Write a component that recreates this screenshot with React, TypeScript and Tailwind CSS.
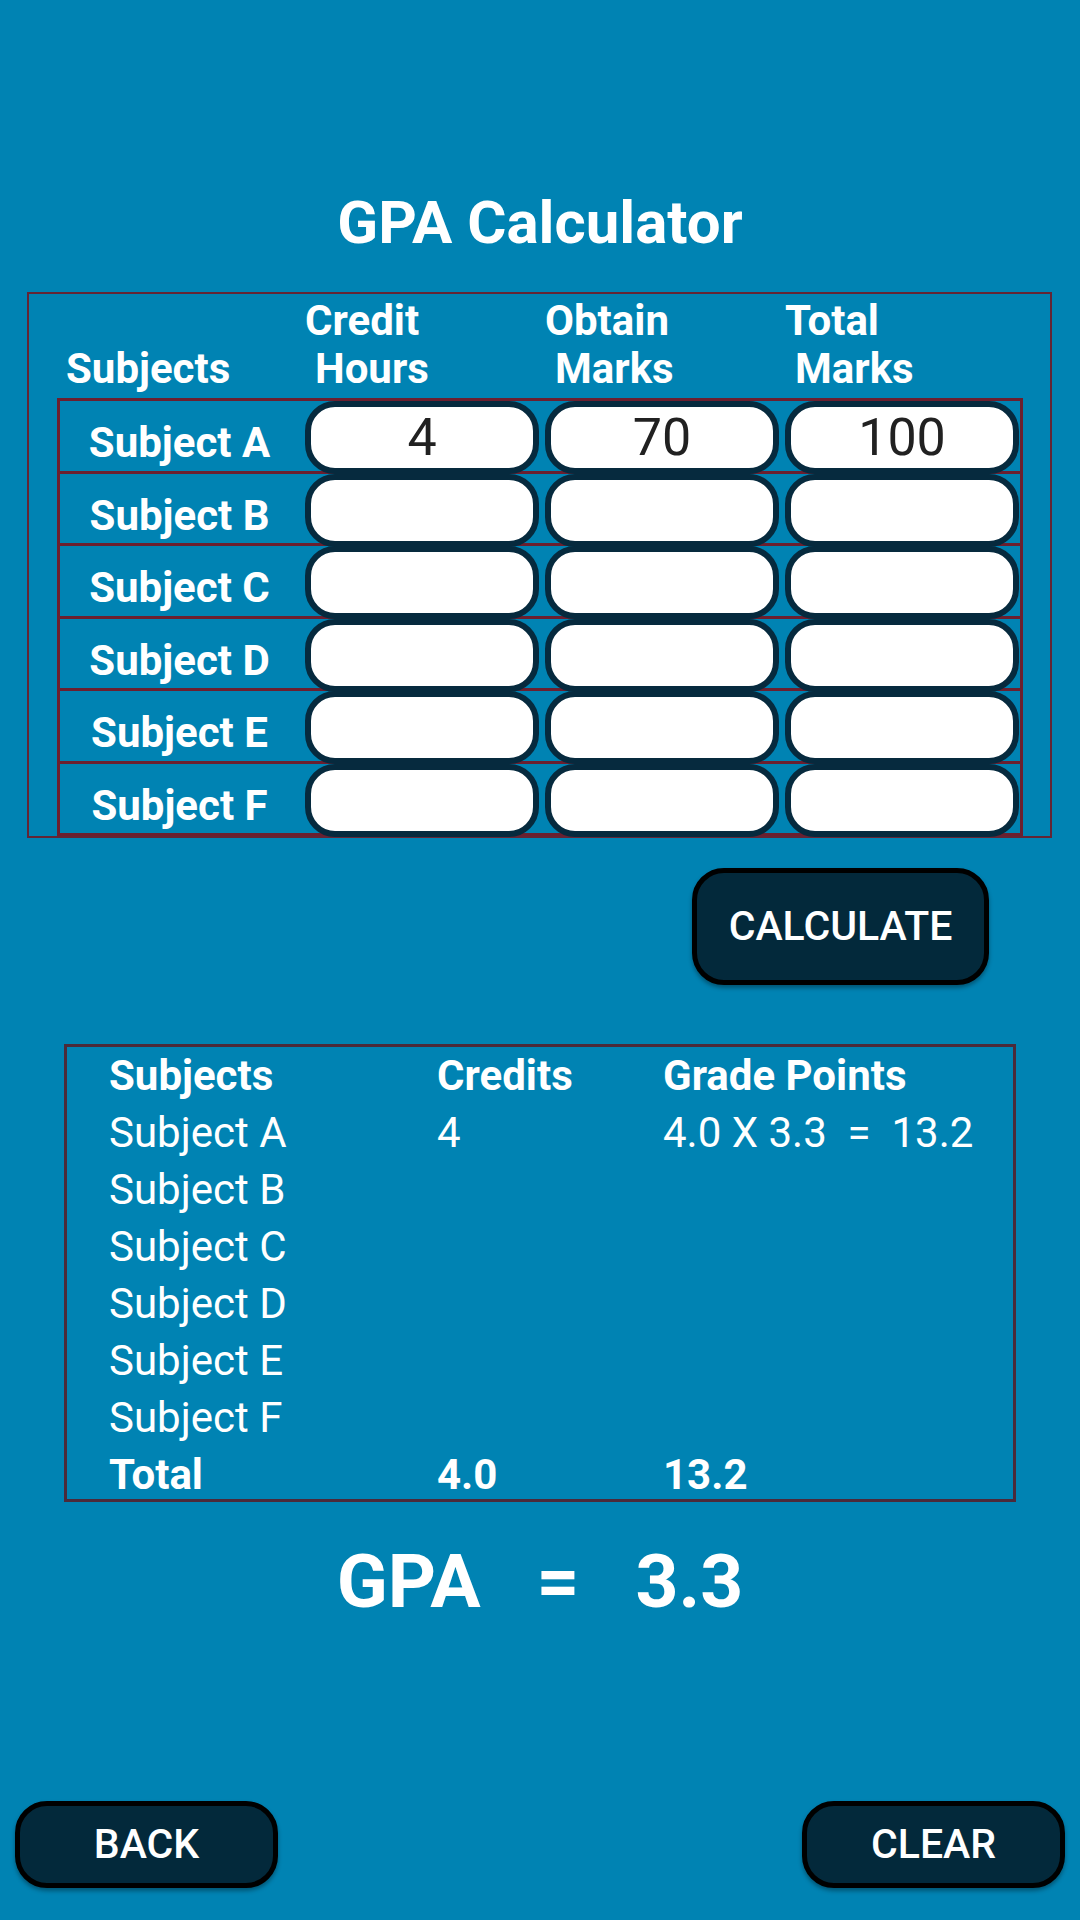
const SUBJECTS = ['A', 'B', 'C', 'D', 'E', 'F'];

const INPUTS: Record<string, [string, string, string]> = {
  A: ['4', '70', '100'],
};

const RESULTS: { name: string; credits: string; points: string }[] = [
  { name: 'Subject A', credits: '4', points: '4.0 X 3.3  =  13.2' },
  { name: 'Subject B', credits: '', points: '' },
  { name: 'Subject C', credits: '', points: '' },
  { name: 'Subject D', credits: '', points: '' },
  { name: 'Subject E', credits: '', points: '' },
  { name: 'Subject F', credits: '', points: '' },
];

function Field({ value }: { value: string }) {
  return (
    <input
      readOnly
      value={value}
      className="w-full h-full min-w-0 rounded-[30px] border-[6px] border-[#062a3e] bg-white text-center text-[52px] leading-none text-[#212121] outline-none"
    />
  );
}

function DarkButton({ label, className }: { label: string; className: string }) {
  return (
    <button
      className={`flex items-center justify-center rounded-[32px] border-[5px] border-black bg-[#03293b] text-[41px] font-medium text-white shadow-[0_3px_4px_rgba(0,0,0,0.35)] ${className}`}
    >
      {label}
    </button>
  );
}

export default function App() {
  return (
    <div className="w-[1080px] h-[1920px] bg-[#0083b3] flex flex-col font-['Roboto','Liberation_Sans',sans-serif] text-white">
      <h1 className="mt-[188px] h-[70px] leading-[70px] text-center text-[60px] font-bold">GPA Calculator</h1>

      <div className="mt-[34px] ml-[27px] w-[1025px] border-2 border-[#632535]">
        <div className="h-[104px] flex items-end pb-[5px] ml-[28px] mr-[27px] px-[3px]">
          <div className="grid grid-cols-[239px_234px_234px_234px] gap-x-[6px] w-full text-[42px] font-bold leading-[48px]">
            <div className="pl-[6px] self-end">Subjects</div>
            <div>Credit<br /><span className="pl-[10px]">Hours</span></div>
            <div>Obtain<br /><span className="pl-[10px]">Marks</span></div>
            <div>Total<br /><span className="pl-[10px]">Marks</span></div>
          </div>
        </div>

        <div className="ml-[28px] mr-[27px] border-x-[3px] border-t-[3px] border-[#6b1f2f]">
          {SUBJECTS.map(s => {
            const v = INPUTS[s] ?? ['', '', ''];
            return (
              <div key={s} className="h-[72.5px] border-b-[3px] border-[#6b1f2f] grid grid-cols-[239px_234px_234px_234px] gap-x-[6px]">
                <div className="flex items-center justify-center pt-[10px] text-[42px] font-bold">Subject {s}</div>
                <Field value={v[0]} />
                <Field value={v[1]} />
                <Field value={v[2]} />
              </div>
            );
          })}
        </div>
      </div>

      <DarkButton label="CALCULATE" className="mt-[30px] self-end mr-[91px] w-[297px] h-[117px]" />

      <div className="mt-[59px] ml-[64px] w-[952px] h-[458px] border-[3px] border-[#4b2a3a] pl-[42px] text-[42px] leading-[57px]">
        <div className="grid grid-cols-[328px_226px_1fr] font-bold">
          <div>Subjects</div>
          <div>Credits</div>
          <div>Grade Points</div>
        </div>
        {RESULTS.map(r => (
          <div key={r.name} className="grid grid-cols-[328px_226px_1fr] h-[57px]">
            <div>{r.name}</div>
            <div>{r.credits}</div>
            <div className="whitespace-pre">{r.points}</div>
          </div>
        ))}
        <div className="grid grid-cols-[328px_226px_1fr] font-bold">
          <div>Total</div>
          <div>4.0</div>
          <div>13.2</div>
        </div>
      </div>

      <div className="mt-[36px] h-[86px] leading-[86px] text-center text-[75px] font-bold whitespace-pre">GPA   =   3.3</div>

      <div className="mt-auto mb-[32px] px-[15px] flex justify-between">
        <DarkButton label="BACK" className="w-[263px] h-[87px]" />
        <DarkButton label="CLEAR" className="w-[263px] h-[87px]" />
      </div>
    </div>
  );
}
